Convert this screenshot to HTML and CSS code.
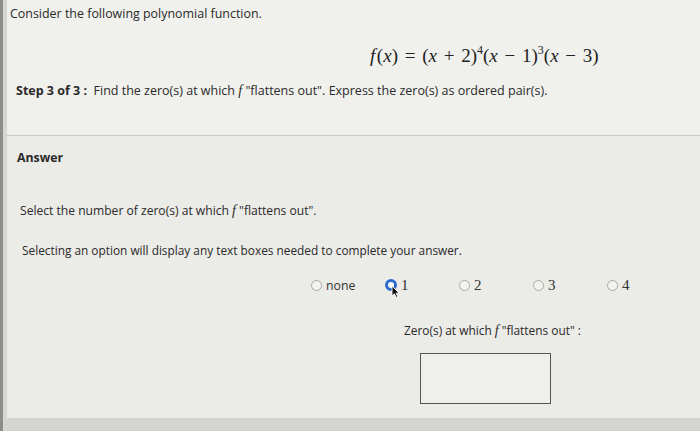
FILE: index.html
```html
<!DOCTYPE html>
<html lang="en">
<head>
<meta charset="utf-8">
<title>Polynomial step 3</title>
<link rel="stylesheet" href="styles.css">
</head>
<body>
<div class="page">
  <div class="edge"></div>
  <main class="main">
    <section class="question">
      <p class="intro">Consider the following polynomial function.</p>
      <p class="formula"><i>f</i>&#8202;(<i>x</i>) <span class="op">=</span> (<i>x</i> <span class="op">+</span> 2)<sup>4</sup>(<i>x</i> <span class="op">−</span> 1)<sup>3</sup>(<i>x</i> <span class="op">−</span> 3)</p>
      <p class="step"><b>Step 3 of 3 :</b>&nbsp; Find the zero(s) at which <i class="fn">f</i> "flattens out". Express the zero(s) as ordered pair(s).</p>
    </section>
    <section class="answer">
      <h2 class="answer-title">Answer</h2>
      <p class="prompt">Select the number of zero(s) at which <i class="fn">f</i> "flattens out".</p>
      <p class="hint">Selecting an option will display any text boxes needed to complete your answer.</p>
      <div class="options">
        <label class="opt"><span class="radio"></span><span class="lbl-sans">none</span></label>
        <label class="opt"><span class="radio checked"><span class="cursor"><svg width="9" height="13" viewBox="0 0 9 13"><path d="M1 1 L1 11 L3.4 8.8 L5.2 12.4 L6.8 11.6 L5.1 8.2 L8.2 8.2 Z" fill="#111" stroke="#fff" stroke-width="0.9" stroke-linejoin="round"/></svg></span></span><span class="lbl-serif">1</span></label>
        <label class="opt"><span class="radio"></span><span class="lbl-serif">2</span></label>
        <label class="opt"><span class="radio"></span><span class="lbl-serif">3</span></label>
        <label class="opt"><span class="radio"></span><span class="lbl-serif">4</span></label>
      </div>
      <p class="zero-label">Zero(s) at which <i class="fn">f</i> "flattens out" :</p>
      <div class="box"></div>
    </section>
    <div class="bottom"></div>
  </main>
</div>
</body>
</html>
```
FILE: styles.css
```css
html, body {
  margin: 0;
  padding: 0;
  height: 100%;
  overflow: hidden;
}
body {
  background: #edede9;
  font-family: "Open Sans", "Liberation Sans", sans-serif;
  color: #2a2a2a;
  font-size: 12.5px;
}
.page {
  display: flex;
  height: 431px;
}
.edge {
  width: 3px;
  background: #8d8d8a;
  border-right: 4px solid #d6d6d2;
  flex: none;
}
.main {
  flex: 1;
  display: flex;
  flex-direction: column;
}
p { margin: 0; }
.question {
  background: #f0f0ed;
  height: 135px;
  border-bottom: 1px solid #c9c9c5;
  display: flex;
  flex-direction: column;
}
.intro {
  padding: 5px 0 0 3px;
  line-height: 17px;
  font-size: 12.45px;
}
.formula {
  font-family: "Liberation Serif", "Times New Roman", serif;
  font-size: 19px;
  line-height: 22px;
  margin: 23px 0 0 363px;
  color: #222;
  white-space: nowrap;
}
.formula .op {
  padding: 0 2px;
}
.formula sup {
  font-size: 12px;
  line-height: 0;
  vertical-align: 0;
  position: relative;
  top: -8px;
}
.step {
  margin: 15px 0 0 9px;
  line-height: 17px;
}
.step b { font-weight: 700; }
.fn {
  font-family: "Liberation Serif", "Times New Roman", serif;
  font-size: 14px;
}
.answer {
  flex: 1;
  background: #ebebe7;
  display: flex;
  flex-direction: column;
  font-size: 12px;
}
.answer-title {
  margin: 13px 0 0 10px;
  font-size: 12.3px;
  font-weight: 700;
  line-height: 17px;
}
.prompt {
  margin: 36px 0 0 13px;
  line-height: 17px;
  font-size: 12.1px;
}
.hint {
  margin: 23px 0 0 15px;
  line-height: 17px;
  font-size: 11.85px;
}
.options {
  display: flex;
  margin: 18px 0 0 304px;
}
.opt {
  width: 74px;
  display: flex;
  align-items: center;
  gap: 4px;
  height: 16px;
}
.radio {
  width: 9px;
  height: 9px;
  border: 1px solid #a8a8a6;
  border-radius: 50%;
  background: #f2f2f0;
  flex: none;
  position: relative;
}
.radio.checked {
  width: 6px;
  height: 6px;
  border: 3px solid #2a6ccd;
  background: #fff;
}
.cursor {
  position: absolute;
  left: 3px;
  top: 3px;
  line-height: 0;
}
.lbl-sans {
  font-size: 12.3px;
  color: #333;
}
.lbl-serif {
  font-family: "Liberation Serif", "Times New Roman", serif;
  font-size: 15px;
  color: #333;
}
.zero-label {
  margin: 29px 0 0 397px;
  line-height: 17px;
  font-size: 11.9px;
}
.box {
  width: 129px;
  height: 49px;
  border: 1.5px solid #555;
  margin: 14px 0 0 413px;
  background: #efefec;
}
.bottom {
  height: 13px;
  background: #d4d4d0;
  flex: none;
}
```
